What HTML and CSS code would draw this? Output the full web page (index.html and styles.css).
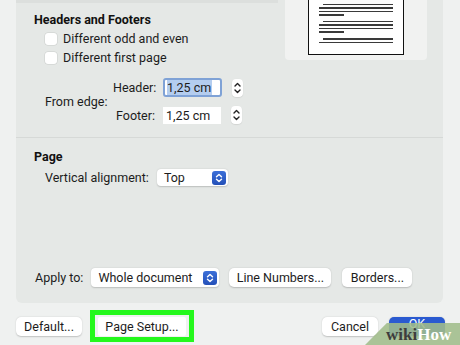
FILE: index.html
```html
<!DOCTYPE html>
<html>
<head>
<meta charset="utf-8">
<link rel="stylesheet" href="styles.css">
</head>
<body>
<div class="panel">
  <section class="hf">
    <div class="hf-left">
      <div class="topline"></div>
      <h2 class="title">Headers and Footers</h2>
      <label class="check"><span class="box"></span>Different odd and even</label>
      <label class="check"><span class="box"></span>Different first page</label>
      <div class="edge">
        <span class="edge-label">From edge:</span>
        <div class="edge-rows">
          <div class="erow">
            <span class="fl">Header:</span>
            <span class="field focus"><span class="sel">1,25 cm</span></span>
            <span class="stepper"><svg viewBox="0 0 11 18" width="11" height="18"><path d="M3 7 L5.5 4.5 L8 7 M3 11 L5.5 13.5 L8 11" fill="none" stroke="#222" stroke-width="1.4" stroke-linecap="round" stroke-linejoin="round"/></svg></span>
          </div>
          <div class="erow">
            <span class="fl">Footer:</span>
            <span class="field">1,25 cm</span>
            <span class="stepper"><svg viewBox="0 0 11 18" width="11" height="18"><path d="M3 7 L5.5 4.5 L8 7 M3 11 L5.5 13.5 L8 11" fill="none" stroke="#222" stroke-width="1.4" stroke-linecap="round" stroke-linejoin="round"/></svg></span>
          </div>
        </div>
      </div>
    </div>
    <div class="preview">
      <div class="doc">
        <span class="ln ind"></span><span class="ln"></span><span class="ln"></span><span class="ln short"></span>
        <span class="ln ind gap"></span><span class="ln"></span><span class="ln"></span><span class="ln short"></span>
        <span class="ln ind gap"></span><span class="ln"></span>
      </div>
    </div>
  </section>
  <div class="sep"></div>
  <section class="page">
    <h2 class="title">Page</h2>
    <div class="row valign">
      <span class="lbl">Vertical alignment:</span>
      <span class="popup top">Top<span class="arrows"><svg viewBox="0 0 14 14" width="14" height="14"><path d="M4.5 5.8 L7 3.5 L9.5 5.8 M4.5 8.2 L7 10.5 L9.5 8.2" fill="none" stroke="#fff" stroke-width="1.4" stroke-linecap="round" stroke-linejoin="round"/></svg></span></span>
    </div>
  </section>
  <div class="row apply">
    <span class="lbl">Apply to:</span>
    <span class="popup whole">Whole document<span class="arrows"><svg viewBox="0 0 14 14" width="14" height="14"><path d="M4.5 5.8 L7 3.5 L9.5 5.8 M4.5 8.2 L7 10.5 L9.5 8.2" fill="none" stroke="#fff" stroke-width="1.4" stroke-linecap="round" stroke-linejoin="round"/></svg></span></span>
    <span class="btn linenum">Line Numbers...</span>
    <span class="btn borders">Borders...</span>
  </div>
</div>
<div class="footer">
  <span class="btn default">Default...</span>
  <span class="hl"><span class="btn setup">Page Setup...</span></span>
  <span class="spacer"></span>
  <span class="btn cancel">Cancel</span>
  <span class="btn ok">OK</span>
</div>
<div class="wm"><span class="wiki">wiki</span><span class="how">How</span></div>
</body>
</html>
```
FILE: styles.css
```css
html, body {
  margin: 0;
  padding: 0;
}
body {
  width: 460px;
  height: 345px;
  overflow: hidden;
  position: relative;
  background: #eff1f0;
  font-family: Roboto, "Liberation Sans", sans-serif;
  font-size: 12.5px;
  color: #1c1c1c;
  white-space: nowrap;
}
.panel {
  margin-left: 16px;
  width: 427px;
  height: 303px;
  background: #e5e8e6;
  border-radius: 0 0 6px 6px;
  display: flex;
  flex-direction: column;
}
.hf {
  display: flex;
  height: 137px;
}
.hf-left {
  width: 262px;
}
.topline {
  height: 3px;
  background: #dcdfdd;
  margin-bottom: 9px;
}
.title {
  margin: 0 0 0 18px;
  font-size: 12.5px;
  font-weight: 700;
  line-height: 15px;
  color: #111;
}
.check {
  display: flex;
  align-items: center;
  height: 19px;
  margin-left: 29px;
  gap: 6px;
}
.check:first-of-type {
  margin-top: 2px;
}
.box {
  width: 12px;
  height: 12px;
  background: #fff;
  border-radius: 3px;
  box-shadow: 0 0 0 0.5px rgba(0,0,0,0.12);
}
.edge {
  display: flex;
  align-items: center;
  margin: 11px 0 0 29px;
}
.edge-label {
  width: 68px;
  padding-top: 1px;
}
.edge-rows {
  display: flex;
  flex-direction: column;
  gap: 9px;
}
.erow {
  display: flex;
  align-items: center;
  height: 18px;
}
.erow:first-child { height: 19px; }
.fl {
  width: 42px;
  text-align: right;
}
.field {
  background: #fff;
  width: 58px;
  height: 17px;
  line-height: 17px;
  padding-left: 3px;
  margin-left: 8px;
  box-sizing: border-box;
}
.field.focus {
  width: 59px;
  height: 19px;
  line-height: 15px;
  border: 2px solid #7fa2d6;
  border-radius: 3px;
  padding-left: 2px;
}
.sel {
  background: #b4cdef;
  display: inline-block;
  line-height: 15px;
  padding-right: 1px;
}
.stepper {
  width: 11px;
  height: 18px;
  background: #fff;
  border-radius: 4px;
  margin-left: 10px;
  display: flex;
  box-shadow: 0 0.5px 1px rgba(0,0,0,0.15);
}
.preview {
  margin-left: 7px;
  width: 142px;
  height: 60px;
  background: #f1f2f1;
  border-radius: 0 0 4px 4px;
  display: flex;
  justify-content: center;
}
.doc {
  width: 96px;
  height: 55px;
  box-sizing: border-box;
  background: #fff;
  border: 1.5px solid #111;
  border-top: none;
  padding: 4px 9px 0 10px;
  display: flex;
  flex-direction: column;
  align-items: flex-start;
}
.ln {
  display: block;
  height: 1.4px;
  background: #3a3a3a;
  width: 74px;
  margin-top: 2px;
}
.ln:first-child { margin-top: 0; }
.ln.ind {
  width: 70px;
  margin-left: 4px;
}
.ln.short { width: 25px; }
.ln.gap { margin-top: 5.5px; }
.sep {
  height: 1px;
  background: #d6d9d7;
}
.page {
  padding-top: 11px;
  flex: 1;
}
.row {
  display: flex;
  align-items: center;
}
.valign {
  margin: 5px 0 0 29px;
  gap: 8px;
}
.popup {
  background: #fff;
  height: 17px;
  border-radius: 4px;
  display: flex;
  align-items: center;
  padding-left: 7px;
  box-sizing: border-box;
  box-shadow: 0 0.5px 1.5px rgba(0,0,0,0.18);
  position: relative;
}
.popup.top { width: 71px; }
.popup.whole { width: 128px; height: 19px; }
.arrows {
  position: absolute;
  right: 2px;
  top: 50%;
  margin-top: -7px;
  width: 14px;
  height: 14px;
  border-radius: 3px;
  background: linear-gradient(#3b6fd8, #2450b8);
  display: flex;
}
.apply {
  margin: 0 0 16px 19px;
  gap: 8px;
}
.btn {
  display: inline-flex;
  align-items: center;
  justify-content: center;
  background: #fff;
  height: 19px;
  border-radius: 5px;
  box-shadow: 0 0.5px 1.5px rgba(0,0,0,0.2);
  box-sizing: border-box;
}
.linenum { width: 102px; margin-left: 2px; }
.borders { width: 70px; margin-left: 3px; }
.footer {
  display: flex;
  align-items: center;
  margin-top: 7px;
  padding-left: 16px;
}
.default { width: 66px; }
.hl {
  margin-left: 8px;
  border: 5px solid #24f81c;
  padding: 1px 3px;
  height: 32px;
  box-sizing: border-box;
  display: flex;
  align-items: center;
}
.setup { width: 88px; box-shadow: none; border-radius: 2px; }
.spacer { flex: 1; }
.cancel { width: 56px; }
.ok {
  width: 56px;
  margin-left: 11px;
  margin-right: 15px;
  background: #2a5ad0;
  color: #fff;
  align-items: flex-start;
  line-height: 14px;
}
.wm {
  position: absolute;
  left: 365px;
  top: 323px;
  width: 95px;
  height: 22px;
  background: rgba(160, 188, 138, 0.88);
  clip-path: polygon(23% 0, 100% 0, 100% 100%, 0 100%);
  font-family: "Liberation Serif", serif;
  font-weight: 700;
  font-size: 17px;
  line-height: 24px;
  padding-left: 21px;
  box-sizing: border-box;
}
.wiki { color: #3d3d3d; }
.how { color: #fff; }
```
